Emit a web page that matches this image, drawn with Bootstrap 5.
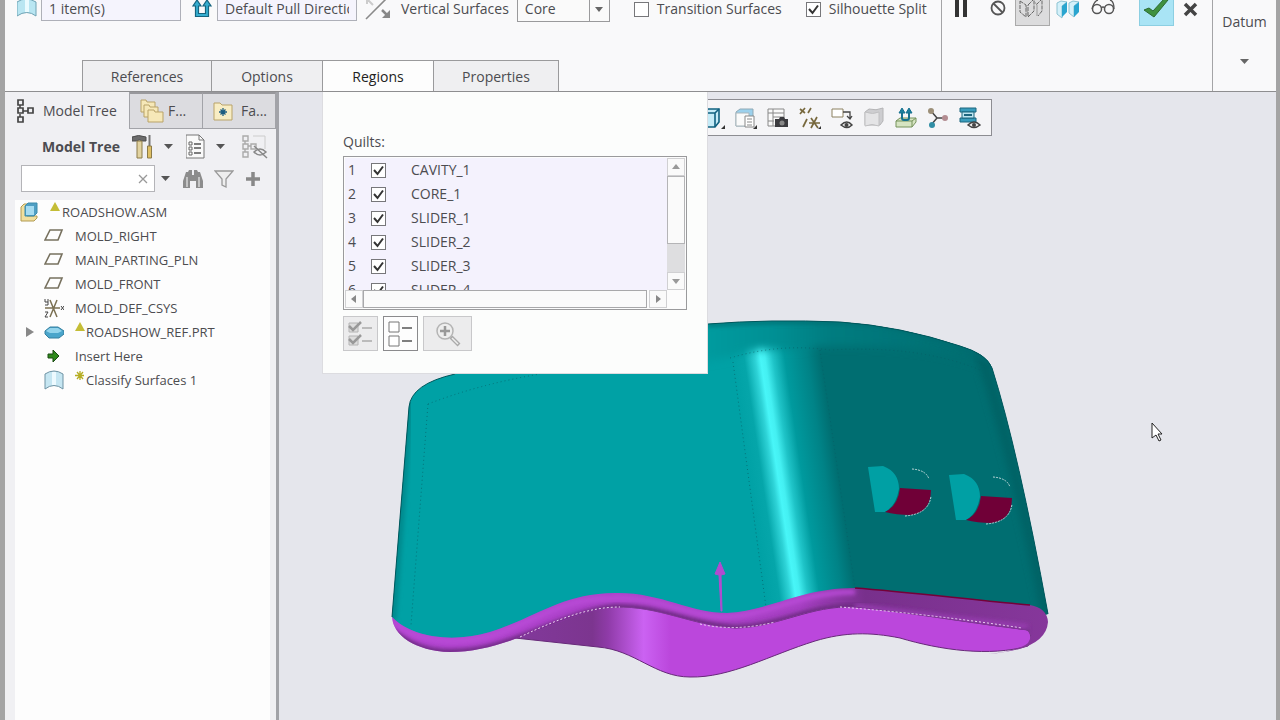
<!DOCTYPE html>
<html lang="en">
<head>
    <meta charset="UTF-8">
    <meta name="viewport" content="width=device-width, initial-scale=1">
    <title>Classify Surfaces</title>
    <link href="https://cdn.jsdelivr.net/npm/bootstrap@5.3.0/dist/css/bootstrap.min.css" rel="stylesheet">
    <style>
        body { font-family: "Open Sans", "Noto Sans", sans-serif; font-size: 14px; line-height: 20px; color: #4c4c50; background: #fafafa; }
        svg { display: block; flex: none; }
        button { color: inherit; }
        .frame { border-left: 5px solid #a4a4a4; border-right: 4px solid #a4a4a4; }
        .ic { width: 20px; height: 20px; }
        .plain { border: 0; padding: 0; background: none; }

        /* ribbon */
        .ribbon { height: 92px; border-bottom: 1px solid #8e8e90; background: #f9f9fa; }
        .tools { height: 34px; margin-top: -8px; }
        .field { height: 24px; width: 140px; padding: 0 7px 2px; border: 1px solid #aeb0b8; background: #f5f4fd; color: #4c4c50; }
        .drop { height: 26px; width: 93px; padding: 0 7px; border: 1px solid #9a9a9c; border-radius: 0; appearance: none; color: #4c4c50;
            background: #fafafa url("data:image/svg+xml,%3Csvg xmlns='http://www.w3.org/2000/svg' width='20' height='24'%3E%3Cpath d='M.5 0v24' stroke='%239a9a9c'/%3E%3Cpath d='M6 10h8l-4 5z' fill='%23666'/%3E%3C/svg%3E") no-repeat right center; }
        .tick { appearance: none; width: 15px; height: 15px; margin: 0; border: 1px solid #77777a; background: #fff; flex: none; }
        .tick:checked { background: #fff url("data:image/svg+xml,%3Csvg xmlns='http://www.w3.org/2000/svg' width='13' height='13'%3E%3Cpath d='M2 6l3.500 4 5.500-7.500' fill='none' stroke='%23333' stroke-width='2'/%3E%3C/svg%3E") center; }
        .tabs { padding-left: 77px; height: 31px; }
        .tabs button { border: 1px solid #9a9a9c; border-bottom: 0; border-left: 0; background: #efeff1; width: 111px; padding: 1px 0 0; }
        .tabs button:first-child { border-left: 1px solid #9a9a9c; width: 130px; }
        .tabs button:last-child { width: 125px; }
        .tabs .current { background: #fdfdfd; color: #222; }
        .actions { width: 272px; border-left: 1px solid #a4a4a6; border-right: 1px solid #a4a4a6; }
        .datum { width: 63px; }
        .pressed { width: 35px; height: 34px; border: 1px solid #aaa; background: #dcdcdd; }
        .accept { width: 35px; height: 34px; border: 1px solid #8ccfe2; background: #a9e4f5; }

        /* model tree */
        .side { width: 274px; border-right: 3px solid #a2a3a8; background: #f0f0f3; }
        .sidetabs { height: 37px; }
        .sidetabs button { border: 0; background: #dcdce0; border-right: 1px solid #a2a3a8; border-bottom: 1px solid #a2a3a8; border-top: 2px solid #98989c; padding: 0 0 0 10px; width: 73px; }
        .sidetabs .current { width: 125px; background: none; border-top: 0; border-bottom: 0; }
        .search { width: 134px; height: 27px; border: 1px solid #b4b4b8; background: #fff; }
        .search input { border: 0; outline: 0; background: none; min-width: 0; }
        .treebox { margin: 0 6px 0 10px; background: #fdfdfd; font-size: 13px; }
        .treebox li { height: 24px; padding-left: 29px; gap: 11px; }
        .treebox .root { padding-left: 5px; gap: 9px; }
        .treebox .parent { padding-left: 10px; gap: 9px; }
        .flagged { gap: 1px; }

        /* graphics area */
        .view { background: #e5e6ec; }
        .viewbar { width: 428px; height: 37px; margin-top: 7px; padding-right: 10px; gap: 10px; border: 1px solid #8d8d92; background: #f5f5f7; }
        .viewbar svg { width: 22px; height: 22px; }

        /* regions panel */
        .panel { left: 43px; top: 0; width: 386px; padding: 40px 20px 22px; background: #fcfdfc; border: 1px solid #dcdce0; border-top: 0; }
        .quilts { height: 154px; margin: 4px 0 6px; border: 1px solid #9a9a9c; padding: 1px; background: #fcfcfc; }
        .rows { background: #f4f2fd; }
        .rows td { height: 24px; padding: 0; }
        .rows td:nth-child(1) { width: 26px; padding-left: 3px; }
        .rows td:nth-child(2) { width: 40px; }
        .bar-y { width: 18px; background: #dedee0; }
        .bar-x { height: 18px; margin-right: 18px; }
        .bar-y button, .bar-x button { width: 18px; height: 18px; border: 1px solid #d0d0d2; background: #fafafa; padding: 0; flex: none; }
        .thumb-y { height: 68px; border: 1px solid #b4b4b6; background: #fafafa; }
        .thumb-x { border: 1px solid #a8a8aa; background: #fafafa; margin-right: 2px; }
        .picks { gap: 5px; }
        .pick { width: 35px; height: 35px; border: 1px solid #c8c8ca; background: #ececed; padding: 0; }
        .pick.live { border-color: #8a8a8c; background: #fdfdfd; }
        .pick.wide { width: 49px; }
    </style>
</head>
<body>
<div class="frame vh-100 d-flex flex-column overflow-hidden">

    <!-- Ribbon -->
    <header class="ribbon d-flex overflow-hidden flex-shrink-0">
        <div class="flex-grow-1 d-flex flex-column justify-content-between">
            <div class="tools d-flex align-items-center text-nowrap ps-2">
                <svg class="ic ms-1" viewBox="0 0 20 20"><path d="M0 3Q9-3 19 3V17Q10 10 0 17z" fill="#b9e6f2" stroke="#6fa3b4"/><path d="M10 0v13" stroke="#e9fbff" stroke-width="4"/></svg>
                <input class="field ms-1" type="text" value="1 item(s)" aria-label="Surfaces">
                <svg class="ms-2 me-1" width="24" height="22" viewBox="0 0 24 22"><path d="M8 2L4 8H6.500V18.500H19.500V8H22L18 2L14 8H16.500V15.500H9.500V8H12z" fill="#35aed0" stroke="#14647f" stroke-width="1.200"/></svg>
                <input class="field" type="text" value="Default Pull Direction" aria-label="Pull direction">
                <svg class="ms-2" width="28" height="24" viewBox="0 0 28 24"><path d="M1 22L22 1" stroke="#8a8a8a" stroke-width="1.600"/><path d="M2 2l6 6M2 7V2h5" stroke="#ccc" stroke-width="2" fill="none"/><path d="M17 13l5 5" stroke="#888" stroke-width="2.500"/><path d="M25 13v8h-8z" fill="#888"/></svg>
                <label class="ms-2" for="vertical">Vertical Surfaces</label>
                <select class="drop ms-2" id="vertical"><option>Core</option><option>Cavity</option></select>
                <input class="tick ms-4" type="checkbox" id="transition"><label class="ms-2" for="transition">Transition Surfaces</label>
                <input class="tick ms-4" type="checkbox" id="silhouette" checked><label class="ms-2" for="silhouette">Silhouette Split</label>
            </div>
            <nav class="tabs d-flex">
                <button type="button">References</button>
                <button type="button">Options</button>
                <button type="button" class="current">Regions</button>
                <button type="button">Properties</button>
            </nav>
        </div>
        <div class="actions flex-shrink-0">
            <div class="tools d-flex align-items-center justify-content-between ps-2 pe-2">
                <button class="plain ms-1" type="button" aria-label="Pause"><svg class="ic" viewBox="0 0 20 20"><path d="M1 1h4v17H1zM9 1h4v17h-4z" fill="#333"/></svg></button>
                <button class="plain ms-2" type="button" aria-label="No preview"><svg class="ic" viewBox="0 0 20 20"><circle cx="10" cy="9" r="6.500" fill="none" stroke="#555" stroke-width="1.800"/><path d="M5.500 4.500l9 9" stroke="#555" stroke-width="1.800"/></svg></button>
                <button class="pressed d-flex align-items-center justify-content-center p-0" type="button" aria-label="Unattached"><svg width="28" height="24" viewBox="0 0 28 24"><path d="M2 4l6 4v12l-6-5zM10 8l6-6v12l-6 6zM18 8l6-6v12l-4 5" fill="none" stroke="#666" stroke-dasharray="4 1"/><path d="M16 4l3 4v11M8 8l2 11" fill="none" stroke="#999"/></svg></button>
                <button class="plain" type="button" aria-label="Attached"><svg width="24" height="20" viewBox="0 0 24 20"><path d="M1 4l4-2 6 1-5 4v12l-5-4zM13 4l4-2 6 1-5 4v11l-5-4z" fill="#d5f1fa" stroke="#8dc3d2"/><path d="M6 7l5-4v10l-5 5zM18 7l5-4v10l-5 5z" fill="#2aa5cf"/></svg></button>
                <button class="plain ms-1" type="button" aria-label="Verify"><svg width="26" height="20" viewBox="0 0 26 20"><circle cx="7" cy="10" r="4.500" fill="none" stroke="#555" stroke-width="1.500"/><circle cx="19" cy="10" r="4.500" fill="none" stroke="#555" stroke-width="1.500"/><path d="M11 9q2-2 4 0M2 10Q4 2 8 1M24 10Q24 2 20 1" fill="none" stroke="#555" stroke-width="1.300"/></svg></button>
                <button class="accept d-flex align-items-center justify-content-center p-0 ms-3" type="button" aria-label="OK"><svg width="26" height="20" viewBox="0 0 26 20"><path d="M1 11l5-2 4 3L21 0l4 1L11 18z" fill="#3f9140" stroke="#2d6a31"/></svg></button>
                <button class="plain me-1" type="button" aria-label="Cancel"><svg class="ic" viewBox="0 0 20 20"><path d="M5 5l11 11M16 5L5 16" stroke="#444" stroke-width="3.500"/></svg></button>
            </div>
        </div>
        <div class="datum flex-shrink-0 text-center">
            <button class="plain w-100 pt-2 mt-1" type="button">Datum<svg class="mx-auto mt-4" width="12" height="10" viewBox="0 0 12 10"><path d="M1 3h9L5.500 8z" fill="#666"/></svg></button>
        </div>
    </header>

    <main class="d-flex flex-grow-1">
        <!-- Model tree -->
        <aside class="side d-flex flex-column flex-shrink-0">
            <div class="sidetabs d-flex">
                <button type="button" class="current d-flex align-items-center gap-2">
                    <svg width="20" height="24" viewBox="0 0 20 24"><path d="M5 6v3M5 15v3M8 12h5" stroke="#444" stroke-width="1.500"/><path d="M3 1h5v5H3zM3 9h5v5H3zM3 18h5v5H3zM13 9h5v5h-5z" fill="none" stroke="#444" stroke-width="1.700"/></svg>
                    <span class="text-nowrap">Model Tree</span>
                </button>
                <button type="button" class="d-flex align-items-center gap-1">
                    <svg width="24" height="24" viewBox="0 0 24 24"><g fill="#f6e8b8" stroke="#b9a368"><path d="M1 1h5l1 2h8v10H1z"/><path d="M4 6h5l1 2h8v10H4z"/><path d="M8 11h6l1 2h8v10H8z"/></g></svg>
                    <span>F...</span>
                </button>
                <button type="button" class="d-flex align-items-center gap-2">
                    <svg class="ic" viewBox="0 0 20 20"><path d="M1 2h6l2 2h10v15H1z" fill="#f8edc4" stroke="#b9a368"/><path d="M10 7v8M6 11h8M7.500 8.500l5 5M12.500 8.500l-5 5" stroke="#1b5c80" stroke-width="1.300"/></svg>
                    <span>Fa...</span>
                </button>
            </div>
            <div class="d-flex align-items-center ps-3 pe-2 pt-1">
                <strong class="text-end flex-grow-1 pe-2 me-1 text-nowrap">Model Tree</strong>
                <button class="plain d-flex align-items-center gap-1 me-2" type="button" aria-label="Settings">
                    <svg width="24" height="28" viewBox="0 0 24 28"><path d="M0 4q6-3 14 0v4h-3q-4-2-7 0H0z" fill="#6b6b6b" stroke="#4c4c4c"/><path d="M5 8h5v17H5z" fill="#e2d3a0" stroke="#8b7a48"/><path d="M17.500 2v12" stroke="#777" stroke-width="2"/><path d="M15.500 13h4v12h-4z" fill="#dfc065" stroke="#8b7a48"/></svg>
                    <svg width="18" height="10" viewBox="0 0 18 10"><path d="M4 2h9L8.500 7z" fill="#555"/></svg>
                </button>
                <button class="plain d-flex align-items-center gap-1 me-2" type="button" aria-label="Show">
                    <svg width="22" height="26" viewBox="0 0 22 26"><path d="M0 1h13l5 5v18H0z" fill="#fafafa" stroke="#777"/><path d="M13 1v5h5" fill="none" stroke="#777"/><path d="M8 10h7M8 14h7M8 19h7" stroke="#555" stroke-width="1.500"/><path d="M3 8h3v3H3zM3 13h3v3H3zM3 18h3v3H3z" fill="none" stroke="#666"/></svg>
                    <svg width="18" height="10" viewBox="0 0 18 10"><path d="M4 2h9L8.500 7z" fill="#555"/></svg>
                </button>
                <button class="plain ms-1" type="button" aria-label="Hide items"><svg width="26" height="26" viewBox="0 0 26 26"><path d="M1 2h5v5H1zM1 10h5v5H1zM1 18h5v5H1zM9 10h5v5H9zM6 12h3M3 7v3M3 15v3" fill="none" stroke="#aaa" stroke-width="1.400"/><path d="M11 2h12v13" fill="none" stroke="#ccc"/><path d="M12 18q6-6 12 0-6 6-12 0zM12 12l13 12" fill="none" stroke="#888" stroke-width="1.500"/></svg></button>
            </div>
            <div class="d-flex align-items-center ps-3 pe-3 pt-1 pb-2">
                <div class="search d-flex align-items-center">
                    <input class="flex-grow-1" type="text" aria-label="Search">
                    <button class="plain px-1" type="button" aria-label="Clear"><svg width="14" height="14" viewBox="0 0 14 14"><path d="M3 3l8 8M11 3l-8 8" stroke="#999" stroke-width="1.300"/></svg></button>
                </div>
                <div class="d-flex flex-grow-1 justify-content-between align-items-center ps-1">
                    <svg width="14" height="10" viewBox="0 0 14 10"><path d="M2 2h9L6.500 7z" fill="#555"/></svg>
                    <button class="plain" type="button" aria-label="Find"><svg width="22" height="20" viewBox="0 0 22 20"><path d="M3 3h2l1-2h3v5h2V1h3l1 2h2l3 9v7h-7v-7H7v7H0v-7z" fill="#8c8c8c"/><path d="M4 8v10M16 8v10" stroke="#c4c4c4" stroke-width="2"/></svg></button>
                    <button class="plain" type="button" aria-label="Filter"><svg class="ic" viewBox="0 0 20 20"><path d="M1 2h18l-7 8v8l-4-2v-6z" fill="#eee" stroke="#999" stroke-width="1.300"/></svg></button>
                    <button class="plain" type="button" aria-label="Add"><svg width="16" height="20" viewBox="0 0 16 20"><path d="M9 3v14M2 10h14" stroke="#888" stroke-width="3.500"/></svg></button>
                </div>
            </div>
            <ul class="treebox list-unstyled flex-grow-1 text-nowrap">
                <li class="root d-flex align-items-center">
                    <svg class="ic" viewBox="0 0 20 20"><path d="M1 5l3-3h3v12h10v2l-3 3H1z" fill="#f1df9e" stroke="#b29b52"/><path d="M5 4l3-3h9v10l-3 3H5z" fill="#4f9fc4" stroke="#3f8dac"/><path d="M6 4h8v9H6z" fill="#a6dcf1"/></svg>
                    <span class="flagged d-flex"><svg width="12" height="12" viewBox="0 0 12 12"><path d="M6 0l5 9H1z" fill="#c4bd36"/></svg>ROADSHOW.ASM</span>
                </li>
                <li class="d-flex align-items-center"><svg class="ic" viewBox="0 0 20 20"><path d="M6 4h12l-4 10H1z" fill="none" stroke="#77715f" stroke-width="1.600"/></svg>MOLD_RIGHT</li>
                <li class="d-flex align-items-center"><svg class="ic" viewBox="0 0 20 20"><path d="M6 4h12l-4 10H1z" fill="none" stroke="#77715f" stroke-width="1.600"/></svg>MAIN_PARTING_PLN</li>
                <li class="d-flex align-items-center"><svg class="ic" viewBox="0 0 20 20"><path d="M6 4h12l-4 10H1z" fill="none" stroke="#77715f" stroke-width="1.600"/></svg>MOLD_FRONT</li>
                <li class="d-flex align-items-center"><svg class="ic" viewBox="0 0 20 20"><path d="M1 10h15M6 2l7 17M13 2L6 19" stroke="#7b7052" stroke-width="1.500"/><path d="M1 1v3h3M4 1v6H1M17 8l3 4M20 8l-3 4M1 14h3l-3 5h3" fill="none" stroke="#444"/></svg>MOLD_DEF_CSYS</li>
                <li class="parent d-flex align-items-center">
                    <svg width="10" height="12" viewBox="0 0 10 12"><path d="M1 1l8 5-8 5z" fill="#888"/></svg>
                    <svg class="ic" viewBox="0 0 20 20"><path d="M1 9l5-4h8l6 4v3l-5 4H5l-4-4z" fill="#4aa5cb" stroke="#347f9f"/><path d="M2 9l4-3h8l4 3-4 2H6z" fill="#93d4ec"/></svg>
                    <span class="flagged d-flex"><svg width="12" height="12" viewBox="0 0 12 12"><path d="M7 0l5 9H2z" fill="#c4bd36"/></svg>ROADSHOW_REF.PRT</span>
                </li>
                <li class="d-flex align-items-center"><svg class="ic" viewBox="0 0 20 20"><path d="M4 8h5V4l6 6-6 6v-4H4z" fill="#2f8a1c" stroke="#1a4a12"/></svg>Insert Here</li>
                <li class="d-flex align-items-center">
                    <svg class="ic" viewBox="0 0 20 20"><path d="M1 4Q10-2 19 4V19Q10 12 1 19z" fill="#c6e6f2" stroke="#6f93a4"/><path d="M10 2v13" stroke="#edfaff" stroke-width="4"/></svg>
                    <span class="flagged d-flex"><svg width="10" height="12" viewBox="0 0 10 12"><path d="M5 1v9M0 5.500h9M2 2l6 7M8 2L2 9" stroke="#b5ad24" stroke-width="1.300"/></svg>Classify Surfaces 1</span>
                </li>
            </ul>
        </aside>

        <!-- Graphics area -->
        <section class="view position-relative flex-grow-1 overflow-hidden">
            <svg class="position-absolute top-0 start-0 w-100 h-100" viewBox="279 92 997 628" preserveAspectRatio="xMidYMid meet" role="img" aria-label="Mold reference model">
                <defs>
                    <linearGradient id="skin" gradientUnits="userSpaceOnUse" x1="731" y1="360" x2="819" y2="347">
                        <stop offset="0" stop-color="#00a1a5"/><stop offset=".15" stop-color="#05a6aa"/><stop offset=".27" stop-color="#2ed3d7"/>
                        <stop offset=".33" stop-color="#48f6f8"/><stop offset=".38" stop-color="#44f0f2"/><stop offset=".47" stop-color="#1fc4c8"/><stop offset=".6" stop-color="#009a9e"/>
                        <stop offset=".85" stop-color="#008387"/><stop offset="1" stop-color="#006e71"/>
                    </linearGradient>
                    <linearGradient id="crown" gradientUnits="userSpaceOnUse" x1="700" y1="0" x2="990" y2="0">
                        <stop offset="0" stop-color="#009ca0"/><stop offset=".25" stop-color="#009094"/><stop offset=".45" stop-color="#007c80"/><stop offset="1" stop-color="#006b6e"/>
                    </linearGradient>
                    <linearGradient id="inside" gradientUnits="userSpaceOnUse" x1="515" y1="0" x2="670" y2="0">
                        <stop offset="0" stop-color="#82399b"/><stop offset=".5" stop-color="#7c358f"/><stop offset=".6" stop-color="#8f3ba8"/>
                        <stop offset=".83" stop-color="#cb62f2"/><stop offset="1" stop-color="#bb47dc"/>
                    </linearGradient>
                    <linearGradient id="rim" gradientUnits="userSpaceOnUse" x1="390" y1="0" x2="1050" y2="0">
                        <stop offset="0" stop-color="#b244d0"/><stop offset=".62" stop-color="#a63fc3"/><stop offset=".72" stop-color="#78308c"/><stop offset="1" stop-color="#86379b"/>
                    </linearGradient>
                    <filter id="soft"><feGaussianBlur stdDeviation="4"/></filter>
                    <filter id="softer"><feGaussianBlur stdDeviation="2"/></filter>
                    <clipPath id="body"><path d="M392 617L409 407Q411 384 455 374Q580 329 708 324Q770 319 840 322Q900 326 960 346Q987 354 992 368Q1018 450 1048 614L1030 620L860 600L730 622L610 604L450 645Q410 642 392 617z"/></clipPath>
                    <clipPath id="lip"><path id="lipShape" d="M392 617C410 636 450 644 490 632C540 616 560 594 615 593C660 592 690 613 727 613C770 611 800 588 855 588C910 592 980 601 1030 605Q1047 608 1048 622Q1046 650 988 654Q1018 651 1028 643Q1034 634 1026 630C970 623 900 611 855 607C810 605 780 627 735 628C690 625 660 606 615 607C560 613 510 652 450 652C415 651 393 635 392 617z"/></clipPath>
                </defs>
                <g clip-path="url(#body)">
                    <path d="M380 310h700v350H380z" fill="url(#skin)"/>
                    <path d="M680 300H1000L996 372Q950 350 880 347Q820 344 795 349Q750 347 735 356L680 366z" fill="url(#crown)" filter="url(#soft)"/>
                    <path d="M409 400L392 620" stroke="#008a8e" stroke-width="9" filter="url(#softer)"/>
                    <path d="M980 350Q1018 470 1048 620" fill="none" stroke="#006164" stroke-width="10" filter="url(#soft)"/>
                    <path d="M708 325Q800 319 885 326Q960 344 990 362" fill="none" stroke="#006c70" stroke-width="3" filter="url(#softer)"/>
                </g>
                <path d="M428 404L411 625M428 404Q480 384 540 374M733 362L766 607M820 350L855 588M730 358Q780 343 830 350Q920 345 980 370" fill="none" stroke="#075f66" stroke-width=".7" stroke-dasharray="1 3"/>
                <path d="M455 374Q411 384 409 407L392 617M708 324Q770 319 840 322Q900 326 960 346Q987 354 992 368Q1018 450 1048 614" fill="none" stroke="#00575c"/>

                <path d="M515 638C560 620 590 607 615 607C660 606 690 625 735 628C780 627 810 605 855 607C900 611 970 623 1028 630Q1034 638 1028 646C990 657 940 650 900 638C870 632 845 632 815 641C770 655 730 678 690 677C655 677 635 650 598 647z" fill="url(#inside)" stroke="#672a79"/>
                <use href="#lipShape" fill="url(#rim)"/>
                <g clip-path="url(#lip)" fill="none">
                    <path d="M392 630C415 651 440 653 455 652C510 652 560 613 615 607C660 606 690 625 735 628C780 627 810 605 855 607C900 611 970 623 1028 630" stroke="#6c2b80" stroke-width="6" filter="url(#softer)"/>
                    <path d="M394 623C415 640 450 646 490 636C540 620 560 598 615 598C660 597 690 617 727 617C770 615 800 592 855 592" stroke="#b94cd7" stroke-width="5" filter="url(#softer)"/>
                    <path d="M855 606L1028 627" stroke="#9a3cb3" stroke-width="5" filter="url(#softer)"/>
                </g>
                <path d="M855 588C910 592 980 601 1030 605" stroke="#740038" stroke-width="1.500" fill="none"/>
                <path d="M520 637C560 618 590 607 620 607M700 624Q735 632 775 622M840 607Q930 614 1022 628" fill="none" stroke="#edd4f3" stroke-dasharray="2 2"/>

                <!-- slider windows -->
                <g id="window">
                    <path d="M868 467L883 466Q899 472 899 489Q896 506 885 512H875z" fill="#00a0a4"/>
                    <path d="M900 488L931 490Q931 512 911 515Q896 515 885 512Q898 506 900 488z" fill="#700037"/>
                    <path d="M905 516Q929 514 931 496M912 469Q926 470 929 479" fill="none" stroke="#b7d5d6" stroke-dasharray="2 1"/>
                </g>
                <use href="#window" x="81" y="8"/>

                <!-- pull direction -->
                <path d="M721 611L719 575L715 574L720 562L725 574L721 575L722 611z" fill="#b14bd0" stroke="#b14bd0"/>
                <!-- pointer -->
                <path d="M1152 423v15l4-3 3 6 2-1-3-6h4z" fill="#fff" stroke="#222"/>
            </svg>

            <div class="viewbar position-relative mx-auto d-flex align-items-center justify-content-end">
                <svg viewBox="0 0 22 22"><path d="M1 5l4-3h11v13l-4 5H1z" fill="#c5ebf7" stroke="#0f6180" stroke-width="1.600"/><path d="M1 6h11v14M12 6l4-4" fill="none" stroke="#0f6180" stroke-width="1.600"/><path d="M22 18v4h-4z" fill="#333"/></svg>
                <svg viewBox="0 0 22 22"><path d="M1 5l4-3h13v12l-3 5H1z" fill="#9bd0ec" stroke="#90a9b5"/><path d="M1 6h13v13H1z" fill="#fafafa" stroke="#a9b5ba"/><path d="M10 9h9v11h-9z" fill="#fff" stroke="#888"/><path d="M12 12h5M12 15h5M12 18h5" stroke="#888"/><path d="M22 18v4h-4z" fill="#333"/></svg>
                <svg viewBox="0 0 22 22"><path d="M1 2h16v17H1zM1 6h16M6 2v17M6 10h11M1 14h6" fill="#fafafa" stroke="#888"/><path d="M8 12h4l1-2h4l1 2h3v8H8z" fill="#3b3b3f"/><circle cx="15" cy="16" r="2.500" fill="#888"/></svg>
                <svg viewBox="0 0 22 22"><path d="M1 2l5 4M6 1L1 7M12 1l-3 5M8 12l-4 8M10 16h11M12 11l7 10M18 10l-6 11" stroke="#77683d" stroke-width="1.700"/><path d="M22 19v3h-3z" fill="#333"/></svg>
                <svg viewBox="0 0 22 22"><path d="M1 2h11v8H1z" fill="#fff" stroke="#8c8160"/><path d="M12 5h7v6M16 9l3 3 2-3" fill="none" stroke="#444" stroke-width="1.300"/><path d="M10 18q6-6 11 0-5 5-11 0z" fill="#eee" stroke="#444" stroke-width="1.500"/><circle cx="15.500" cy="18" r="2" fill="#444"/></svg>
                <svg viewBox="0 0 22 22"><path d="M2 5l4-3q7 2 14-1v13l-3 4H2z" fill="#cdcdd0" stroke="#b4b4b6"/><path d="M2 5q8 3 14 0v14q-7-3-14 0z" fill="#e4e4e6" stroke="#c0c0c2"/></svg>
                <svg viewBox="0 0 22 22"><path d="M1 14l4-3h16v4l-4 5H1z" fill="#d6e4c2" stroke="#77935c"/><path d="M1 14h16l4-3M17 14v6" fill="none" stroke="#77935c"/><path d="M7 6v5q0 2 2 2h3q2 0 2-2V6" fill="none" stroke="#15718f" stroke-width="2"/><path d="M4 6l3-5 3 5zM11 6l3-5 3 5z" fill="#1b7f9f" stroke="#15718f"/></svg>
                <svg viewBox="0 0 22 22"><path d="M4 4l6 7-6 7M10 11l9 0" fill="none" stroke="#444" stroke-width="1.500"/><circle cx="4" cy="4" r="3" fill="#9c8f78"/><circle cx="18" cy="11" r="3" fill="#b38c91"/><circle cx="5" cy="18" r="3" fill="#318ea5"/></svg>
                <svg viewBox="0 0 22 22"><path d="M1 1h16v4H1zM1 11h16v4H1z" fill="#3a9dbd" stroke="#1d667f"/><path d="M3 5h12v6H3z" fill="#bfe6f1" stroke="#1d667f"/><path d="M5 8h8" stroke="#1d667f" stroke-width="2"/><path d="M9 18q6-6 12 0-6 5-12 0z" fill="#eee" stroke="#444" stroke-width="1.500"/><circle cx="15" cy="18" r="2" fill="#444"/></svg>
            </div>

            <!-- Regions panel -->
            <div class="panel position-absolute">
                <div id="quiltsLabel">Quilts:</div>
                <div class="quilts d-flex flex-column">
                    <div class="d-flex flex-grow-1 overflow-hidden">
                        <div class="rows flex-grow-1 overflow-hidden">
                            <table class="w-100" aria-labelledby="quiltsLabel">
                                <tbody>
                                    <tr><td>1</td><td><input class="tick d-block" type="checkbox" aria-label="Cavity 1" checked></td><td>CAVITY_1</td></tr>
                                    <tr><td>2</td><td><input class="tick d-block" type="checkbox" aria-label="Core 1" checked></td><td>CORE_1</td></tr>
                                    <tr><td>3</td><td><input class="tick d-block" type="checkbox" aria-label="Slider 1" checked></td><td>SLIDER_1</td></tr>
                                    <tr><td>4</td><td><input class="tick d-block" type="checkbox" aria-label="Slider 2" checked></td><td>SLIDER_2</td></tr>
                                    <tr><td>5</td><td><input class="tick d-block" type="checkbox" aria-label="Slider 3" checked></td><td>SLIDER_3</td></tr>
                                    <tr><td>6</td><td><input class="tick d-block" type="checkbox" aria-label="Slider 4" checked></td><td>SLIDER_4</td></tr>
                                </tbody>
                            </table>
                        </div>
                        <div class="bar-y d-flex flex-column">
                            <button type="button" aria-label="Scroll up"><svg width="16" height="16" viewBox="0 0 16 16"><path d="M4 10h8L8 5z" fill="#999"/></svg></button>
                            <div class="thumb-y"></div>
                            <button class="mt-auto" type="button" aria-label="Scroll down"><svg width="16" height="16" viewBox="0 0 16 16"><path d="M4 6h8l-4 5z" fill="#999"/></svg></button>
                        </div>
                    </div>
                    <div class="bar-x d-flex flex-shrink-0">
                        <button type="button" aria-label="Scroll left"><svg width="16" height="16" viewBox="0 0 16 16"><path d="M10 4v8L5 8z" fill="#888"/></svg></button>
                        <div class="thumb-x flex-grow-1"></div>
                        <button type="button" aria-label="Scroll right"><svg width="16" height="16" viewBox="0 0 16 16"><path d="M6 4v8l5-4z" fill="#888"/></svg></button>
                    </div>
                </div>
                <div class="picks d-flex">
                    <button class="pick" type="button" aria-label="Select all"><svg class="mx-auto" width="28" height="28" viewBox="0 0 28 28"><path d="M2 3h9v9H2zM2 16h9v9H2z" fill="#ddd" stroke="#b4b4b4"/><path d="M2 6l4 4 8-8M2 19l4 4 8-8" fill="none" stroke="#999" stroke-width="2.500"/><path d="M15 8h10M15 21h10" stroke="#aaa" stroke-width="1.500"/></svg></button>
                    <button class="pick live" type="button" aria-label="Clear all"><svg class="mx-auto" width="28" height="28" viewBox="0 0 28 28"><path d="M2 2h10v10H2zM2 16h10v10H2z" fill="#fff" stroke="#777"/><path d="M15 8h10M15 21h10" stroke="#555" stroke-width="1.500"/></svg></button>
                    <button class="pick wide" type="button" aria-label="Zoom to"><svg class="mx-auto" width="28" height="28" viewBox="0 0 28 28"><circle cx="11" cy="11" r="8" fill="#eee" stroke="#b4b4b4" stroke-width="1.500"/><path d="M11 6v10M6 11h10" stroke="#999" stroke-width="2.500"/><path d="M17 17l8 8" stroke="#aaa" stroke-width="4"/><path d="M18 18l6 6" stroke="#eee" stroke-width="1.500"/></svg></button>
                </div>
            </div>
        </section>
    </main>
</div>
<script src="https://cdn.jsdelivr.net/npm/bootstrap@5.3.0/dist/js/bootstrap.bundle.min.js"></script>
</body>
</html>
